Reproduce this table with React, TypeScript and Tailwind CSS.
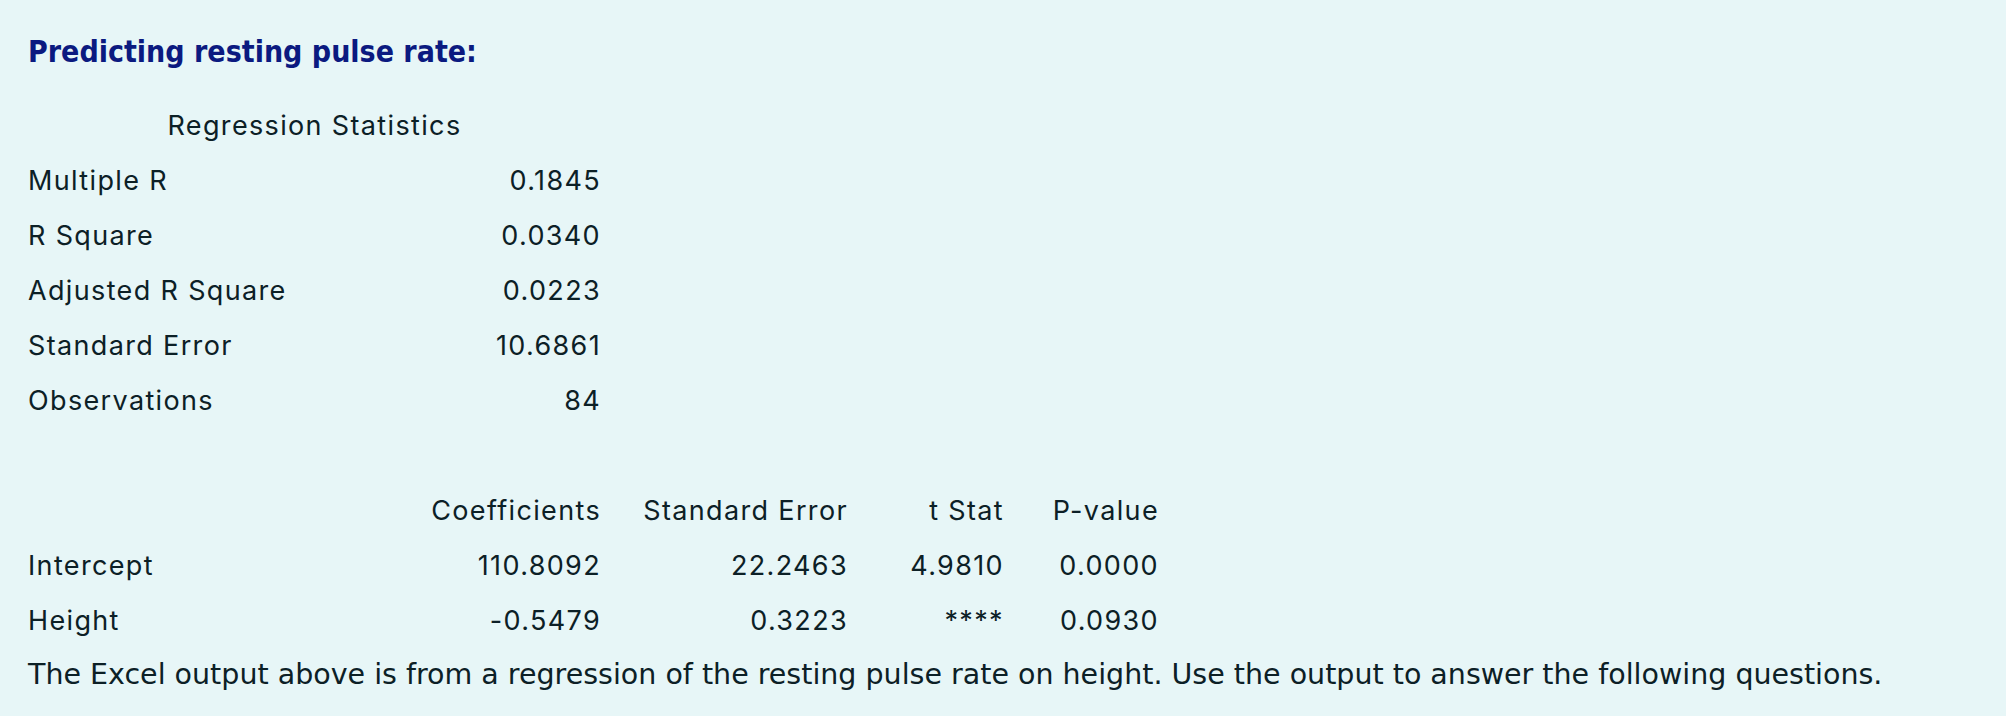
const stats = [
  ["Multiple R", "0.1845"],
  ["R Square", "0.0340"],
  ["Adjusted R Square", "0.0223"],
  ["Standard Error", "10.6861"],
  ["Observations", "84"],
];

const coefs = [
  ["Intercept", "110.8092", "22.2463", "4.9810", "0.0000"],
  ["Height", "-0.5479", "0.3223", "****", "0.0930"],
];

const cell = "h-[55px] flex items-center";

export default function App() {
  return (
    <div className="w-[2006px] h-[716px] bg-[#e7f6f7] text-[#0c2026] pl-[28px] pt-[31px] overflow-hidden">
      <h1 className="h-[40px] flex items-center text-[30px] font-bold text-[#0b1a80] font-['DejaVu_Sans_Condensed','DejaVu_Sans',sans-serif]">
        Predicting resting pulse rate:
      </h1>
      <div className="mt-[28px] grid grid-cols-[372px_201px_247px_156px_155px] text-[27px] tracking-[0.05em] font-['Inter',sans-serif]">
        <div className={`${cell} col-span-2 justify-center`}>Regression Statistics</div>
        <div className="col-span-3" />
        {stats.map(([label, value]) => (
          <div key={label} className="contents">
            <div className={cell}>{label}</div>
            <div className={`${cell} justify-end`}>{value}</div>
            <div className="col-span-3" />
          </div>
        ))}
        <div className={`${cell} col-span-5`} />
        <div className={cell} />
        <div className={`${cell} justify-end`}>Coefficients</div>
        <div className={`${cell} justify-end`}>Standard Error</div>
        <div className={`${cell} justify-end`}>t Stat</div>
        <div className={`${cell} justify-end`}>P-value</div>
        {coefs.map((row) => (
          <div key={row[0]} className="contents">
            {row.map((v, i) => (
              <div key={i} className={`${cell} ${i === 0 ? "" : "justify-end"}`}>
                {v}
              </div>
            ))}
          </div>
        ))}
      </div>
      <p className="h-[52px] flex items-center text-[28.5px] font-['DejaVu_Sans',sans-serif]">
        The Excel output above is from a regression of the resting pulse rate on height. Use the output to answer the following questions.
      </p>
    </div>
  );
}
